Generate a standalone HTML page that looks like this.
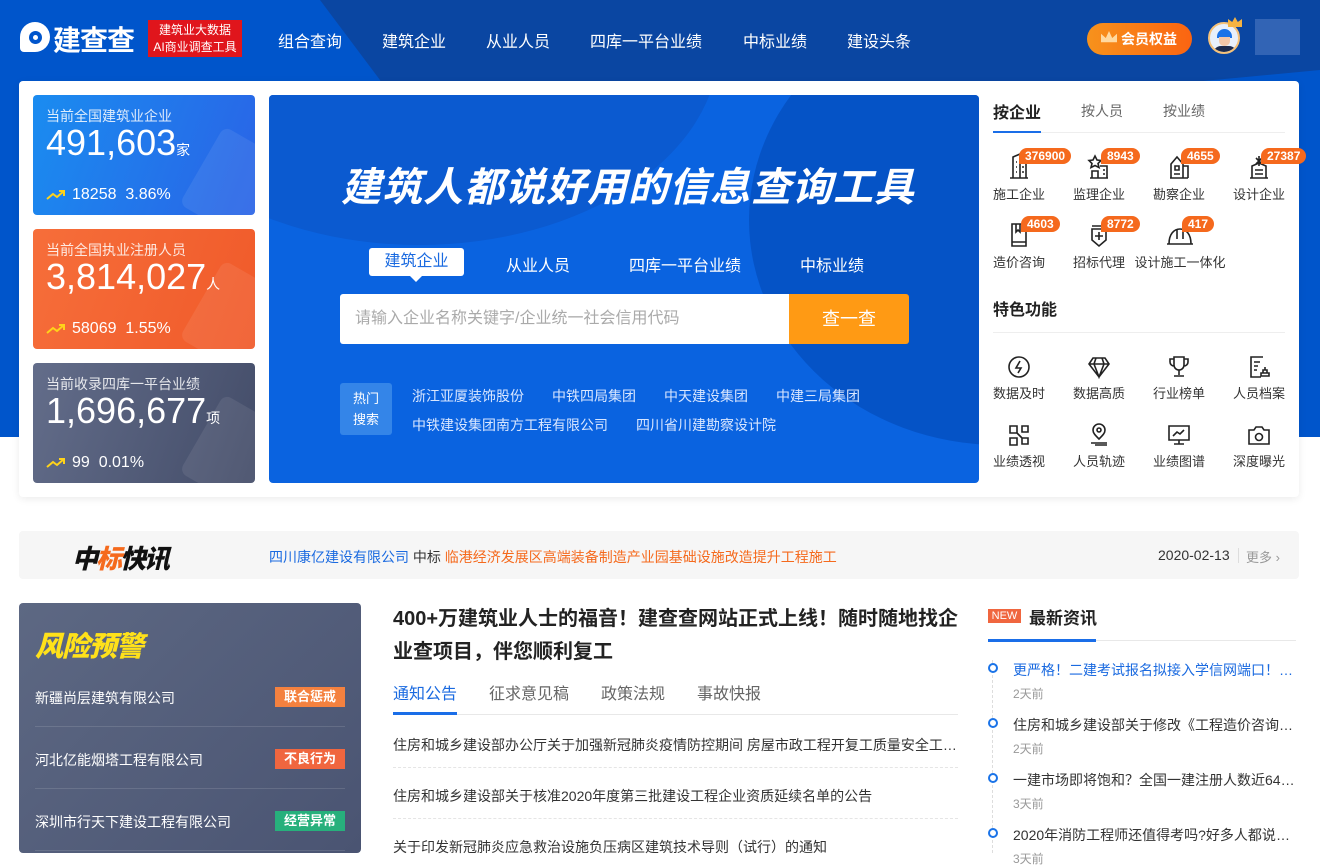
<!DOCTYPE html>
<html><head><meta charset="utf-8">
<style>
*{margin:0;padding:0;box-sizing:border-box}
body{width:1320px;height:853px;overflow:hidden;background:#fff;font-family:"Liberation Sans","Noto Sans CJK SC",sans-serif;color:#333;position:relative}
.abs{position:absolute}
.hdr{left:0;top:0;width:1320px;height:437px;background:#0055cb;overflow:hidden}
.hdr:before{content:"";position:absolute;left:0;top:0;width:1320px;height:437px;background:#0a46a2;clip-path:polygon(320px 0,1320px 0,1320px 70px,1000px 100px,700px 437px,470px 437px,380px 80px)}
.nav a{position:absolute;top:28px;color:#fff;font-size:16px;text-decoration:none;white-space:nowrap}
.card{left:19px;top:81px;width:1280px;height:416px;background:#fff;border-radius:4px;box-shadow:0 2px 8px rgba(0,0,0,.08)}
.stat{left:33px;width:222px;height:120px;border-radius:4px;color:#fff;overflow:hidden}
.stat .t{position:absolute;left:13px;top:11px;font-size:14px;opacity:.85}
.stat .n{position:absolute;left:13px;top:27px;font-size:36px;white-space:nowrap}
.stat .n small{font-size:14px}
.stat .b{position:absolute;left:13px;top:91px;font-size:16px;white-space:nowrap}
.stat .b svg{vertical-align:-2px;margin-right:6px}
.stat .dec{position:absolute;right:-40px;top:50px;width:100px;height:90px;background:rgba(255,255,255,.08);transform:rotate(30deg);border-radius:8px}
.rp{font-size:13px;color:#333}
.ic{position:absolute;width:80px;text-align:center;font-size:13px;white-space:nowrap}
.ic svg{display:block;margin:0 auto 4px}
.badge{position:absolute;background:#f5691d;color:#fff;font-size:12px;font-weight:bold;line-height:16px;padding:0 6px;border-radius:8px 8px 8px 0;top:-4px;left:42px}
.risk{left:19px;top:603px;width:342px;height:250px;background:linear-gradient(135deg,#5d6883,#4a5472);border-radius:4px;overflow:hidden}
.risk .row{position:absolute;left:16px;width:310px;height:62px;border-bottom:1px solid rgba(255,255,255,.12);color:#fff;font-size:14px}
.tag{position:absolute;right:0;width:70px;height:20px;color:#fff;font-size:13px;font-weight:bold;text-align:center;line-height:20px}
.news li{list-style:none;position:absolute;left:1013px;font-size:14px;width:283px;white-space:nowrap;overflow:hidden;text-overflow:ellipsis}
.dot{position:absolute;left:988px;width:10px;height:10px;border:2px solid #1a73e8;border-radius:50%;background:#fff}
.tm{position:absolute;left:1013px;font-size:12px;color:#999}
.art{position:absolute;left:393px;width:565px;font-size:14px;color:#333;white-space:nowrap;overflow:hidden;text-overflow:ellipsis}
.dash{position:absolute;left:393px;width:565px;border-top:1px dashed #e5e5e5}
</style></head><body>
<div class="abs hdr"></div>
<div class="abs" style="left:20px;top:22px;width:30px;height:30px;border-radius:15px 15px 15px 4px;background:#fff"></div>
<div class="abs" style="left:29px;top:31px;width:13px;height:13px;border-radius:50%;background:#0055cc"></div>
<div class="abs" style="left:33px;top:35px;width:5px;height:5px;border-radius:50%;background:#fff"></div>
<div class="abs" style="left:53px;top:19px;color:#fff;font-size:28px;font-weight:bold;letter-spacing:-1px">建查查</div>
<div class="abs" style="left:148px;top:20px;width:94px;height:37px;background:#e0151c;color:#fff;font-size:12px;line-height:17px;text-align:center;padding-top:2px">建筑业大数据<br>AI商业调查工具</div>
<div class="nav"><a style="left:278px">组合查询</a><a style="left:382px">建筑企业</a><a style="left:486px">从业人员</a><a style="left:590px">四库一平台业绩</a><a style="left:743px">中标业绩</a><a style="left:847px">建设头条</a></div>
<div class="abs" style="left:1087px;top:23px;width:105px;height:32px;border-radius:16px;background:linear-gradient(90deg,#f7921c,#fb6411);color:#fff;font-size:14px;font-weight:bold;line-height:32px;padding-left:34px">会员权益</div>
<div class="abs" style="left:1101px;top:31px;width:16px;height:14px;background:#ffd9a0;clip-path:polygon(0 20%,30% 50%,50% 0,70% 50%,100% 20%,100% 80%,0 80%)"></div>
<div class="abs" style="left:1208px;top:22px;width:32px;height:32px;border-radius:50%;background:#e8f0fb;border:2px solid #f5c27a;overflow:hidden"><div style="position:absolute;left:7px;top:5px;width:15px;height:9px;border-radius:8px 8px 0 0;background:#1a73e8"></div><div style="position:absolute;left:9px;top:13px;width:11px;height:9px;background:#f3c7a8;border-radius:0 0 5px 5px"></div><div style="position:absolute;left:3px;top:22px;width:24px;height:10px;background:#1d2b4d;border-radius:8px 8px 0 0"></div></div>
<div class="abs" style="left:1228px;top:17px;width:14px;height:10px;background:#f5b342;clip-path:polygon(0 20%,30% 50%,50% 0,70% 50%,100% 20%,100% 100%,0 100%)"></div>
<div class="abs" style="left:1255px;top:19px;width:45px;height:36px;background:rgba(90,130,200,.5)"></div>

<div class="abs card"></div>
<div class="abs stat" style="top:95px;background:linear-gradient(110deg,#1a8cf0,#2a63e6)"><div class="dec"></div><div class="t">当前全国建筑业企业</div><div class="n">491,603<small>家</small></div><div class="b"><svg width="20" height="12" viewBox="0 0 20 12" fill="none" stroke="#ffd31a" stroke-width="2"><path d="M1 10l6-5 4 3 7-6M13 2h5v5"/></svg>18258&nbsp; 3.86%</div></div>
<div class="abs stat" style="top:229px;background:linear-gradient(110deg,#f66e3a,#f05a2a)"><div class="dec"></div><div class="t">当前全国执业注册人员</div><div class="n">3,814,027<small>人</small></div><div class="b"><svg width="20" height="12" viewBox="0 0 20 12" fill="none" stroke="#ffd31a" stroke-width="2"><path d="M1 10l6-5 4 3 7-6M13 2h5v5"/></svg>58069&nbsp; 1.55%</div></div>
<div class="abs stat" style="top:363px;background:linear-gradient(110deg,#636d8a,#434c68)"><div class="dec"></div><div class="t">当前收录四库一平台业绩</div><div class="n">1,696,677<small>项</small></div><div class="b"><svg width="20" height="12" viewBox="0 0 20 12" fill="none" stroke="#ffd31a" stroke-width="2"><path d="M1 10l6-5 4 3 7-6M13 2h5v5"/></svg>99&nbsp; 0.01%</div></div>

<div class="abs" style="left:269px;top:95px;width:710px;height:388px;border-radius:4px;overflow:hidden;background:#0a63e0">
 <div style="position:absolute;left:480px;top:-100px;width:500px;height:450px;border-radius:50%;background:#0553c6"></div>
 <div style="position:absolute;left:-150px;top:-250px;width:600px;height:400px;border-radius:50%;background:#0b5ad0"></div>
 <div style="position:absolute;left:72px;top:60px;color:#fff;font-size:40px;font-weight:bold;font-style:italic;letter-spacing:1px;white-space:nowrap">建筑人都说好用的信息查询工具</div>
 <div style="position:absolute;left:100px;top:153px;width:95px;height:28px;background:#fff;border-radius:3px;color:#1a6ae0;font-size:16px;text-align:center;line-height:28px">建筑企业</div>
 <div style="position:absolute;left:141px;top:181px;border:6px solid transparent;border-top-color:#fff"></div>
 <div style="position:absolute;left:237px;top:157px;color:#fff;font-size:16px">从业人员</div>
 <div style="position:absolute;left:360px;top:157px;color:#fff;font-size:16px">四库一平台业绩</div>
 <div style="position:absolute;left:531px;top:157px;color:#fff;font-size:16px">中标业绩</div>
 <div style="position:absolute;left:71px;top:199px;width:449px;height:50px;background:#fff;border-radius:3px 0 0 3px;color:#aaa;font-size:16px;line-height:50px;padding-left:15px">请输入企业名称关键字/企业统一社会信用代码</div>
 <div style="position:absolute;left:520px;top:199px;width:120px;height:50px;background:#ff9a14;border-radius:0 3px 3px 0;color:#fff;font-size:18px;text-align:center;line-height:50px">查一查</div>
 <div style="position:absolute;left:71px;top:288px;width:52px;height:52px;background:#3485e8;border-radius:3px;color:#fff;font-size:13px;text-align:center;line-height:21px;padding-top:5px">热门<br>搜索</div>
 <div style="position:absolute;left:143px;top:287px;color:#d8e6ff;font-size:14px;white-space:nowrap;line-height:29px">浙江亚厦装饰股份&emsp;&emsp;中铁四局集团&emsp;&emsp;中天建设集团&emsp;&emsp;中建三局集团<br>中铁建设集团南方工程有限公司&emsp;&emsp;四川省川建勘察设计院</div>
</div>

<div class="abs" style="left:993px;top:99px;font-size:16px;font-weight:bold;color:#222">按企业</div>
<div class="abs" style="left:1081px;top:101px;font-size:14px;color:#666">按人员</div>
<div class="abs" style="left:1163px;top:101px;font-size:14px;color:#666">按业绩</div>
<div class="abs" style="left:993px;top:132px;width:292px;height:1px;background:#eee"></div>
<div class="abs" style="left:993px;top:131px;width:48px;height:2px;background:#1a6ee8"></div>
<div class="rp">
 <div class="ic" style="left:979px;top:152px"><svg width="24" height="28" viewBox="0 0 24 28" fill="none" stroke="#222" stroke-width="1.6"><path d="M3 26h18M6 26V5l7-3v24M13 10h6v16M9 10h1M9 15h1M9 20h1M15 15h2M15 20h2"/></svg>施工企业<span class="badge" style="left:40px">376900</span></div>
 <div class="ic" style="left:1059px;top:152px"><svg width="24" height="28" viewBox="0 0 24 28" fill="none" stroke="#222" stroke-width="1.6"><path d="M3 26h18M8 4l2 4 4 .5-3 3 1 4-4-2-4 2 1-4-3-3 4-.5zM5 26v-7h6v7M13 14h7v12M16 18h2M16 22h2"/></svg>监理企业<span class="badge">8943</span></div>
 <div class="ic" style="left:1139px;top:152px"><svg width="24" height="28" viewBox="0 0 24 28" fill="none" stroke="#222" stroke-width="1.6"><path d="M3 26h18M4 26V12l6-7 6 7v14M8 14h4v4H8zM16 14h5v12M7 22h6"/></svg>勘察企业<span class="badge">4655</span></div>
 <div class="ic" style="left:1219px;top:152px"><svg width="24" height="28" viewBox="0 0 24 28" fill="none" stroke="#222" stroke-width="1.6"><path d="M3 26h18M5 26V14l7-3 7 3v12M9 6l6 6M15 6l-6 6M12 4v10M8 18h8M8 22h8"/></svg>设计企业<span class="badge">27387</span></div>
 <div class="ic" style="left:979px;top:220px"><svg width="24" height="28" viewBox="0 0 24 28" fill="none" stroke="#222" stroke-width="1.6"><path d="M5 4h14v22H5zM5 22h14M9 4v8l2-2 2 2V4"/></svg>造价咨询<span class="badge">4603</span></div>
 <div class="ic" style="left:1059px;top:220px"><svg width="24" height="28" viewBox="0 0 24 28" fill="none" stroke="#222" stroke-width="1.6"><path d="M5 6h14M5 9v11l7 6 7-6V9zM12 12v8M8 16h8"/></svg>招标代理<span class="badge">8772</span></div>
 <div class="ic" style="left:1134px;top:220px;width:92px"><svg width="32" height="28" viewBox="0 0 32 28" fill="none" stroke="#222" stroke-width="1.6"><path d="M3 24h26M5 24c0-10 5-15 11-15s11 5 11 15M13 10v9M19 10v9"/></svg>设计施工一体化<span class="badge" style="left:48px">417</span></div>
</div>
<div class="abs" style="left:993px;top:296px;font-size:16px;font-weight:bold;color:#222">特色功能</div>
<div class="abs" style="left:993px;top:332px;width:292px;height:1px;background:#eee"></div>
<div class="rp">
 <div class="ic" style="left:979px;top:355px"><svg width="24" height="24" viewBox="0 0 24 24" fill="none" stroke="#222" stroke-width="1.6"><circle cx="12" cy="12" r="10"/><path d="M13 6l-4 7h5l-3 5"/></svg>数据及时</div>
 <div class="ic" style="left:1059px;top:355px"><svg width="24" height="24" viewBox="0 0 24 24" fill="none" stroke="#222" stroke-width="1.6"><path d="M6 3h12l4 6-10 13L2 9zM2 9h20M9 3l-2 6 5 13 5-13-2-6"/></svg>数据高质</div>
 <div class="ic" style="left:1139px;top:355px"><svg width="24" height="24" viewBox="0 0 24 24" fill="none" stroke="#222" stroke-width="1.6"><path d="M7 2h10v8a5 5 0 0 1-10 0zM7 4H3v3a4 4 0 0 0 4 4M17 4h4v3a4 4 0 0 1-4 4M12 15v5M7 21h10"/></svg>行业榜单</div>
 <div class="ic" style="left:1219px;top:355px"><svg width="24" height="24" viewBox="0 0 24 24" fill="none" stroke="#222" stroke-width="1.6"><path d="M16 2H4v20h10M7 7h6M7 11h4M7 15h3M14 21h8v-3h-8zM16 18v-3h4v3M18 15v-3"/></svg>人员档案</div>
 <div class="ic" style="left:979px;top:423px"><svg width="24" height="24" viewBox="0 0 24 24" fill="none" stroke="#222" stroke-width="1.6"><path d="M3 3h7v7H3zM15 3h6v6h-6zM3 15h7v7H3zM15 15h6v6h-6zM10 10l5 5"/></svg>业绩透视</div>
 <div class="ic" style="left:1059px;top:423px"><svg width="24" height="24" viewBox="0 0 24 24" fill="none" stroke="#222" stroke-width="1.6"><path d="M12 16c-4-4-6-6-6-9a6 6 0 0 1 12 0c0 3-2 5-6 9z"/><circle cx="12" cy="7" r="2"/><path d="M4 20h16M8 22h12"/></svg>人员轨迹</div>
 <div class="ic" style="left:1139px;top:423px"><svg width="24" height="24" viewBox="0 0 24 24" fill="none" stroke="#222" stroke-width="1.6"><path d="M2 3h20v14H2zM12 17v4M7 21h10M6 13l4-4 3 2 4-4"/></svg>业绩图谱</div>
 <div class="ic" style="left:1219px;top:423px"><svg width="24" height="24" viewBox="0 0 24 24" fill="none" stroke="#222" stroke-width="1.6"><path d="M2 7h5l2-3h6l2 3h5v14H2z"/><circle cx="12" cy="14" r="3.5"/></svg>深度曝光</div>
</div>

<div class="abs" style="left:19px;top:531px;width:1280px;height:48px;background:#f6f6f6;border-radius:4px"></div>
<div class="abs" style="left:72px;top:539px;font-size:26px;font-weight:900;font-style:italic;color:#111;letter-spacing:-2px">中<span style="color:#f56a1d">标</span>快讯</div>
<div class="abs" style="left:269px;top:547px;font-size:14px;white-space:nowrap"><span style="color:#1a6ae0">四川康亿建设有限公司</span> <span style="color:#333">中标</span> <span style="color:#f56a1d">临港经济发展区高端装备制造产业园基础设施改造提升工程施工</span></div>
<div class="abs" style="left:1158px;top:547px;font-size:14px;color:#333">2020-02-13</div>
<div class="abs" style="left:1238px;top:548px;width:1px;height:15px;background:#ddd"></div>
<div class="abs" style="left:1246px;top:547px;font-size:13px;color:#999">更多 ›</div>

<div class="abs risk">
 <div style="position:absolute;left:16px;top:22px;font-size:28px;font-weight:900;color:#ffe11a;font-style:italic;letter-spacing:-1px">风险预警</div>
 <div class="row" style="top:62px"><span style="position:absolute;top:23px">新疆尚层建筑有限公司</span><div class="tag" style="top:22px;background:#f4813f">联合惩戒</div></div>
 <div class="row" style="top:124px"><span style="position:absolute;top:23px">河北亿能烟塔工程有限公司</span><div class="tag" style="top:22px;background:#f0663f">不良行为</div></div>
 <div class="row" style="top:186px"><span style="position:absolute;top:23px">深圳市行天下建设工程有限公司</span><div class="tag" style="top:22px;background:#27b07c">经营异常</div></div>
</div>

<div class="abs" style="left:393px;top:603px;width:570px;font-size:20px;font-weight:bold;color:#222;line-height:33px">400+万建筑业人士的福音！建查查网站正式上线！随时随地找企业查项目，伴您顺利复工</div>
<div class="abs" style="left:393px;top:680px;font-size:16px;color:#1a6ae0">通知公告</div>
<div class="abs" style="left:489px;top:680px;font-size:16px;color:#666">征求意见稿</div>
<div class="abs" style="left:601px;top:680px;font-size:16px;color:#666">政策法规</div>
<div class="abs" style="left:697px;top:680px;font-size:16px;color:#666">事故快报</div>
<div class="abs" style="left:393px;top:714px;width:565px;height:1px;background:#e8e8e8"></div>
<div class="abs" style="left:393px;top:712px;width:64px;height:3px;background:#1a6ee8"></div>
<div class="art" style="top:735px">住房和城乡建设部办公厅关于加强新冠肺炎疫情防控期间 房屋市政工程开复工质量安全工作的通知</div>
<div class="dash" style="top:767px"></div>
<div class="art" style="top:786px">住房和城乡建设部关于核准2020年度第三批建设工程企业资质延续名单的公告</div>
<div class="dash" style="top:818px"></div>
<div class="art" style="top:837px">关于印发新冠肺炎应急救治设施负压病区建筑技术导则（试行）的通知</div>

<div class="abs" style="left:988px;top:609px;width:33px;height:14px;background:#f0663f;color:#fff;font-size:11px;line-height:14px;text-align:center">NEW</div>
<div class="abs" style="left:1029px;top:604px;font-size:17px;font-weight:bold;color:#222">最新资讯</div>
<div class="abs" style="left:988px;top:640px;width:308px;height:1px;background:#e8e8e8"></div>
<div class="abs" style="left:988px;top:639px;width:108px;height:3px;background:#1a6ee8"></div>
<div class="abs" style="left:992px;top:660px;height:193px;border-left:1px dashed #ddd"></div>
<ul class="news">
 <li style="top:660px;color:#1a6ae0">更严格！二建考试报名拟接入学信网端口！考生需注意</li>
 <li style="top:715px">住房和城乡建设部关于修改《工程造价咨询企业管理办法》</li>
 <li style="top:770px">一建市场即将饱和？全国一建注册人数近64万人了</li>
 <li style="top:825px">2020年消防工程师还值得考吗?好多人都说不值得</li>
</ul>
<div class="dot" style="top:663px"></div><div class="dot" style="top:718px"></div><div class="dot" style="top:773px"></div><div class="dot" style="top:828px"></div>
<div class="tm" style="top:685px">2天前</div><div class="tm" style="top:740px">2天前</div><div class="tm" style="top:795px">3天前</div><div class="tm" style="top:850px">3天前</div>
</body></html>
